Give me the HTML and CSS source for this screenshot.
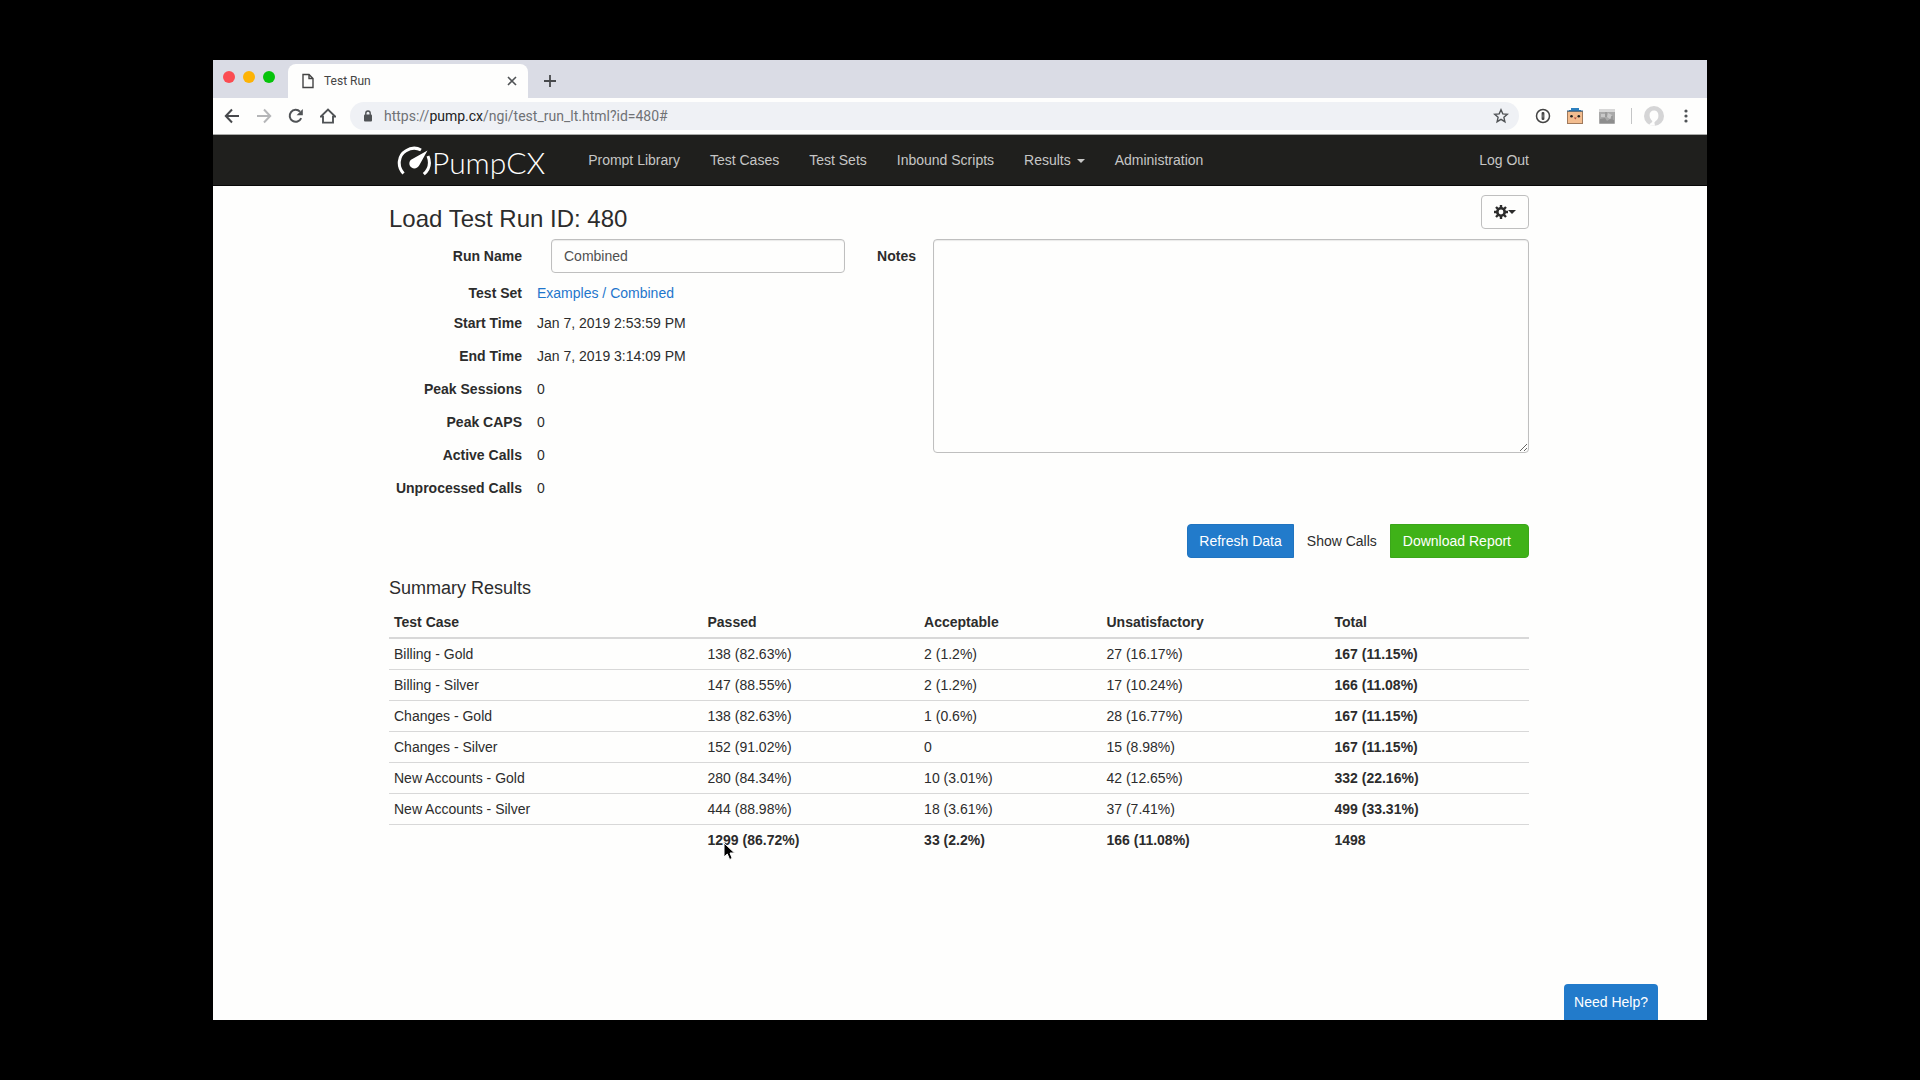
FILE: index.html
```
<!DOCTYPE html>
<html lang="en">
<head>
    <meta charset="UTF-8">
    <meta name="viewport" content="width=device-width, initial-scale=1.0">
    <title>Test Run</title>
    <link rel="stylesheet" href="styles.css">
</head>
<body>
    <div class="window">
        <div class="tab-strip">
            <div class="lights">
                <span class="light red"></span>
                <span class="light yellow"></span>
                <span class="light green"></span>
            </div>
            <div class="tab">
                <svg width="12" height="16" viewBox="0 0 12 16" fill="none" stroke="#444" stroke-width="1.4"><path d="M1 1.5h6l4 4v9H1zM7 1.5v4h4"/></svg>
                <span class="tab-title">Test Run</span>
                <button class="icon-btn" aria-label="Close tab">
                    <svg width="10" height="10" viewBox="0 0 10 10" stroke="#505356" stroke-width="1.6"><path d="M1 1l8 8M9 1L1 9"/></svg>
                </button>
            </div>
            <button class="icon-btn new-tab" aria-label="New tab">
                <svg width="12" height="12" viewBox="0 0 12 12" stroke="#47494c" stroke-width="1.8"><path d="M6 0v12M0 6h12"/></svg>
            </button>
        </div>

        <div class="toolbar">
            <div class="toolbar-nav">
                <button class="icon-btn" aria-label="Back">
                    <svg width="16" height="16" viewBox="0 0 16 16" fill="none" stroke="#47494c" stroke-width="2"><path d="M15 8H2M8 1.5L1.8 8 8 14.5"/></svg>
                </button>
                <button class="icon-btn" aria-label="Forward">
                    <svg width="16" height="16" viewBox="0 0 16 16" fill="none" stroke="#b5b6b8" stroke-width="2"><path d="M1 8h13M8 1.5L14.2 8 8 14.5"/></svg>
                </button>
                <button class="icon-btn" aria-label="Reload">
                    <svg width="16" height="16" viewBox="0 0 16 16"><path d="M13.2 10.2A6 6 0 1 1 12 3.6" fill="none" stroke="#505356" stroke-width="2"/><path d="M14.8 1v6.2H8.6z" fill="#505356"/></svg>
                </button>
                <button class="icon-btn" aria-label="Home">
                    <svg width="16" height="16" viewBox="0 0 16 16" fill="none" stroke="#505356" stroke-width="1.9"><path d="M.8 8.6H3v6h10v-6h2.2L8 1.6z"/></svg>
                </button>
            </div>
            <div class="omnibox">
                <svg width="10" height="12" viewBox="0 0 10 12"><rect x="1" y="4.5" width="8" height="7" rx="1" fill="#505356"/><path d="M2.8 5V3.2a2.2 2.2 0 0 1 4.4 0V5" fill="none" stroke="#505356" stroke-width="1.4"/></svg>
                <span class="url">https://<b>pump.cx</b>/ngi/test_run_lt.html?id=480#</span>
                <button class="icon-btn" aria-label="Bookmark this page">
                    <svg width="16" height="16" viewBox="0 0 16 16" fill="none" stroke="#505356" stroke-width="1.4"><path d="M8 1.8l1.8 4.1 4.5.4-3.4 3 1 4.4L8 11.4l-3.9 2.3 1-4.4-3.4-3 4.5-.4z"/></svg>
                </button>
            </div>
            <div class="extensions">
                <svg width="16" height="16" viewBox="0 0 16 16"><circle cx="8" cy="8" r="6.5" fill="none" stroke="#444" stroke-width="1.5"/><rect x="6.6" y="4" width="2.8" height="8" rx="1" fill="#444"/><path d="M8 6.5v3" stroke="#aaa" stroke-width=".7"/></svg>
                <svg width="16" height="16" viewBox="0 0 16 16"><path d="M4 0h8v2h2v2H2V2h2z" fill="#2d80bf"/><rect x=".5" y="3.5" width="15" height="12" fill="#f3bd8f" stroke="#a07a5c"/><path d="M0 3h16" stroke="#2f6590"/><circle cx="4.5" cy="8.2" r="1.3" fill="#222"/><circle cx="11.8" cy="8.2" r="1.3" fill="#222"/><path d="M6.8 9.5h3L8.3 11.4z" fill="#b54a3c"/></svg>
                <svg width="16" height="16" viewBox="0 0 16 16"><rect y="1" width="16" height="15" rx="1" fill="#a9a9a9"/><path d="M0 1h16v3H0z" fill="#d8d8d8"/><path d="M2 6h4v3H2zM9 5l4 2-2 4-3-2z" fill="#c8c8c8"/><path d="M1 11l5-1 2 3 3-2 4 1v3H1z" fill="#8d8d8d"/><path d="M7 4v5M13 8v4" stroke="#8a8a8a"/></svg>
                <span class="divider"></span>
                <svg width="20" height="20" viewBox="0 0 20 20"><circle cx="10" cy="10" r="10" fill="#d5d5d6"/><path d="M10 4.5c-3.2 0-4.6 2.4-4.4 5.2.2 2.6 1.4 4 2.6 5v1.4L5 18.6a10 10 0 0 0 6 1.2l-.6-3.4 1.5-1.7c1.6-1 2.5-2.6 2.5-5C14.5 6.8 13.2 4.5 10 4.5z" fill="#fefefd"/></svg>
                <button class="icon-btn" aria-label="Menu">
                    <svg width="4" height="14" viewBox="0 0 4 14" fill="#505356"><circle cx="2" cy="2" r="1.6"/><circle cx="2" cy="7" r="1.6"/><circle cx="2" cy="12" r="1.6"/></svg>
                </button>
            </div>
        </div>

        <nav class="navbar">
            <a class="brand" href="#">
                <svg width="36" height="34" viewBox="0 0 36 34" fill="none" stroke="#fff">
                    <path d="M7.5 28.5C1 21.5 2 10.5 10 5.8c4.5-2.9 10.5-3.3 15-.8" stroke-width="3"/>
                    <path d="M32 11c2.6 6.5 1.7 13-4.2 18.2" stroke-width="3"/>
                    <path d="M31.5 5.5L23.3 20.3c-1.5 2.9-5 4.2-7.7 2.3-3-2.1-2.8-5.8-.6-7.9z" fill="#fff" stroke="none"/>
                </svg>
                <span>PumpCX</span>
            </a>
            <a href="#">Prompt Library</a>
            <a href="#">Test Cases</a>
            <a href="#">Test Sets</a>
            <a href="#">Inbound Scripts</a>
            <a href="#">Results <span class="caret"></span></a>
            <a href="#">Administration</a>
            <a class="logout" href="#">Log Out</a>
        </nav>

        <main class="page">
            <div class="page-header">
                <h2>Load Test Run ID: 480</h2>
                <button class="btn btn-default" aria-label="Settings">
                    <svg width="14" height="14" viewBox="0 0 14 14"><circle cx="7" cy="7" r="3.7" fill="none" stroke="#2c2c2c" stroke-width="2.6"/><path d="M7 0v3M7 11v3M0 7h3M11 7h3M2 2l2 2M10 10l2 2M2 12l2-2M10 4l2-2" stroke="#2c2c2c" stroke-width="2.4"/></svg>
                    <span class="caret"></span>
                </button>
            </div>

            <form class="details">
                <div class="fields">
                    <div class="field field-name">
                        <label for="run-name">Run Name</label>
                        <input type="text" id="run-name" value="Combined">
                    </div>
                    <div class="field field-set">
                        <b>Test Set</b>
                        <a href="#">Examples / Combined</a>
                    </div>
                    <div class="field"><b>Start Time</b><span>Jan 7, 2019 2:53:59 PM</span></div>
                    <div class="field"><b>End Time</b><span>Jan 7, 2019 3:14:09 PM</span></div>
                    <div class="field"><b>Peak Sessions</b><span>0</span></div>
                    <div class="field"><b>Peak CAPS</b><span>0</span></div>
                    <div class="field"><b>Active Calls</b><span>0</span></div>
                    <div class="field"><b>Unprocessed Calls</b><span>0</span></div>
                </div>
                <div class="notes">
                    <label for="notes">Notes</label>
                    <textarea id="notes" rows="10"></textarea>
                </div>
            </form>

            <div class="btn-group">
                <button class="btn btn-primary">Refresh Data</button>
                <button class="btn btn-plain">Show Calls</button>
                <button class="btn btn-success">Download Report</button>
            </div>

            <h4>Summary Results</h4>
            <table class="summary">
                <thead>
                    <tr>
                        <th class="col-case">Test Case</th>
                        <th class="col-passed">Passed</th>
                        <th class="col-acceptable">Acceptable</th>
                        <th class="col-unsat">Unsatisfactory</th>
                        <th>Total</th>
                    </tr>
                </thead>
                <tbody>
                    <tr><td>Billing - Gold</td><td>138 (82.63%)</td><td>2 (1.2%)</td><td>27 (16.17%)</td><th>167 (11.15%)</th></tr>
                    <tr><td>Billing - Silver</td><td>147 (88.55%)</td><td>2 (1.2%)</td><td>17 (10.24%)</td><th>166 (11.08%)</th></tr>
                    <tr><td>Changes - Gold</td><td>138 (82.63%)</td><td>1 (0.6%)</td><td>28 (16.77%)</td><th>167 (11.15%)</th></tr>
                    <tr><td>Changes - Silver</td><td>152 (91.02%)</td><td>0</td><td>15 (8.98%)</td><th>167 (11.15%)</th></tr>
                    <tr><td>New Accounts - Gold</td><td>280 (84.34%)</td><td>10 (3.01%)</td><td>42 (12.65%)</td><th>332 (22.16%)</th></tr>
                    <tr><td>New Accounts - Silver</td><td>444 (88.98%)</td><td>18 (3.61%)</td><td>37 (7.41%)</td><th>499 (33.31%)</th></tr>
                </tbody>
                <tfoot>
                    <tr>
                        <td></td>
                        <th>1299 (86.72%)
                            <svg class="cursor" width="13" height="19" viewBox="0 0 13 19"><path d="M1 1v14l3.3-3 2.3 5.5 2.6-1.1L7 11h4.6z" fill="#000" stroke="#fff"/></svg>
                        </th>
                        <th>33 (2.2%)</th>
                        <th>166 (11.08%)</th>
                        <th>1498</th>
                    </tr>
                </tfoot>
            </table>
        </main>

        <button class="help">Need Help?</button>
    </div>
</body>
</html>
```
FILE: styles.css
```
* {
    box-sizing: border-box;
}

body {
    margin: 0;
    height: 100vh;
    padding: 60px 213px;
    background-color: #000;
    font-family: "Liberation Sans", Arial, sans-serif;
    font-size: 14px;
    line-height: 20px;
    color: #2c2c2c;
}

button, input, textarea {
    font: inherit;
    color: inherit;
}

svg {
    display: block;
    flex: none;
}

.window {
    position: relative;
    height: 100%;
    overflow: hidden;
    background-color: #fefefd;
}

/* browser chrome */
.icon-btn {
    display: flex;
    padding: 0;
    border: none;
    background: none;
}

.tab-strip {
    display: flex;
    align-items: flex-end;
    height: 38px;
    background-color: #dadce5;
}

.lights {
    display: flex;
    gap: 8px;
    padding: 0 13px 15px 10px;
}

.light {
    width: 12px;
    height: 12px;
    border-radius: 50%;
}

.red {
    background-color: #fb4c52;
}

.yellow {
    background-color: #fdb305;
}

.green {
    background-color: #06c40b;
}

.tab {
    display: flex;
    align-items: center;
    gap: 10px;
    width: 240px;
    height: 34px;
    padding: 0 11px 0 14px;
    border-radius: 8px 8px 0 0;
    background-color: #fefefd;
    font-family: Roboto, sans-serif;
    font-size: 12px;
    color: #444;
}

.tab-title {
    flex: 1;
}

.new-tab {
    padding: 0 16px 11px;
}

.toolbar {
    display: flex;
    align-items: center;
    height: 37px;
    padding: 0 19px 0 11px;
    border-bottom: 1px solid #a9aaa8;
}

.toolbar-nav {
    display: flex;
    gap: 16px;
}

.omnibox {
    display: flex;
    flex: 1;
    align-items: center;
    gap: 11px;
    height: 28px;
    margin: 0 16px 0 14px;
    padding: 0 10px 0 13px;
    border-radius: 14px;
    background-color: #eff1f5;
}

.url {
    flex: 1;
    font-family: Roboto, sans-serif;
    color: #707275;
}

.url b {
    font-weight: normal;
    color: #222;
}

.extensions {
    display: flex;
    align-items: center;
    gap: 16px;
}

.extensions .icon-btn {
    margin-left: 4px;
}

.divider {
    width: 1px;
    height: 16px;
    margin-right: -4px;
    background-color: #c4c5c6;
}

/* site navigation */
.navbar {
    display: flex;
    align-items: center;
    height: 51px;
    padding: 0 163px 0 183px;
    border-bottom: 1px solid #080808;
    background-color: #1f1f1d;
}

.navbar a {
    padding: 0 15px;
    color: #c6c6c5;
    text-decoration: none;
}

.navbar .brand {
    display: flex;
    align-items: center;
    margin-right: 28px;
    padding: 3px 0 0;
    color: #fff;
    font-family: Lato, sans-serif;
    font-size: 30px;
    font-weight: 300;
}

.navbar .logout {
    margin-left: auto;
}

.caret {
    display: inline-block;
    margin-left: 2px;
    border-top: 4px solid;
    border-right: 4px solid transparent;
    border-left: 4px solid transparent;
    vertical-align: middle;
}

/* page */
.page {
    padding: 9px 178px 0 176px;
}

.page-header {
    display: flex;
    align-items: flex-end;
    justify-content: space-between;
    margin-bottom: 10px;
}

h2, h4 {
    margin: 0;
    font-weight: normal;
}

h2 {
    font-size: 24px;
    line-height: 20px;
}

h4 {
    margin: 20px 0 9px;
    font-size: 18px;
}

.btn {
    height: 34px;
    padding: 0 12px;
    border: 1px solid transparent;
    border-radius: 4px;
    background-color: #fefefd;
}

.btn-default {
    display: flex;
    align-items: center;
    border-color: #bfbfbf;
}

.btn-default .caret {
    margin-left: 0;
}

.details {
    display: grid;
    grid-template-columns: 2fr 3fr;
    align-items: start;
}

.fields {
    display: flex;
    flex-direction: column;
    gap: 13px;
}

.field {
    display: flex;
    gap: 15px;
}

.field label,
.field b {
    width: 133px;
    text-align: right;
    font-weight: bold;
}

.field a {
    color: #1f76cc;
    text-decoration: none;
}

.field-name {
    align-items: center;
    gap: 29px;
    margin-bottom: -3px;
}

.field-set {
    margin-bottom: -3px;
}

input,
textarea {
    flex: 1;
    min-width: 0;
    border: 1px solid #bfbfbf;
    border-radius: 4px;
    background-color: #fefefd;
    box-shadow: inset 0 1px 1px rgba(0, 0, 0, 0.08);
}

input {
    height: 34px;
    padding: 0 12px;
    color: #505050;
}

textarea {
    padding: 6px 12px;
}

.notes {
    display: flex;
    gap: 17px;
}

.notes label {
    width: 71px;
    padding-top: 7px;
    text-align: right;
    font-weight: bold;
}

.btn-group {
    display: flex;
    justify-content: flex-end;
    margin-top: 26px;
}

.btn-primary {
    padding: 0 11px;
    border-color: #2074c0;
    border-radius: 4px 0 0 4px;
    background-color: #227bcb;
    color: #fff;
}

.btn-plain {
    border-radius: 0;
}

.btn-success {
    padding: 0 17px 0 12px;
    border-color: #3ba61a;
    border-radius: 0 4px 4px 0;
    background-color: #3fb218;
    color: #fff;
}

.summary {
    width: 100%;
    border-spacing: 0;
    table-layout: fixed;
}

.summary th,
.summary td {
    padding: 5px;
    text-align: left;
}

.summary thead th {
    border-bottom: 2px solid #d8d8d8;
}

.summary tbody th,
.summary tbody td {
    border-bottom: 1px solid #d8d8d8;
}

.col-case {
    width: 27.5%;
}

.col-passed {
    width: 19%;
}

.col-acceptable {
    width: 16%;
}

.col-unsat {
    width: 20%;
}

.summary tfoot th {
    position: relative;
}

/* mouse pointer over the totals row */
.cursor {
    position: absolute;
    top: 17px;
    left: 20px;
}

.help {
    position: absolute;
    right: 49px;
    bottom: 0;
    height: 36px;
    padding: 0 10px;
    border: none;
    border-radius: 4px 4px 0 0;
    background-color: #227bcb;
    color: #fff;
}
```
